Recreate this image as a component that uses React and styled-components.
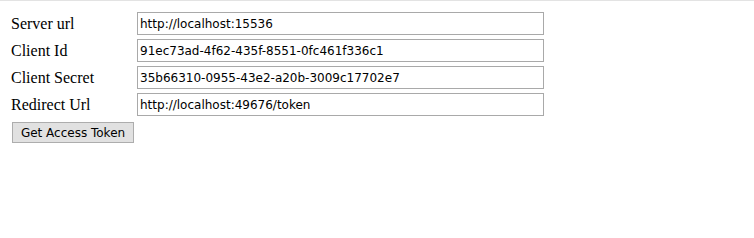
import { Fragment } from "react";
import styled, { createGlobalStyle } from "styled-components";

const GlobalStyle = createGlobalStyle`
    html, body {
        margin: 0;
        padding: 0;
        background: #ffffff;
    }
`;

const Page = styled.div`
    border-top: 1px solid #e3e3e3;
    padding: 11px 0 0 11px;
    height: 226px;
    font-family: "Liberation Serif", "Times New Roman", serif;
    color: #000000;
`;

const Form = styled.form`
    display: flex;
    flex-direction: column;
    align-items: flex-start;
`;

const Fields = styled.div`
    display: grid;
    grid-template-columns: 126px 407px;
    row-gap: 4px;
    align-items: center;
`;

const Label = styled.label`
    font-size: 16px;
    line-height: 23px;
    white-space: nowrap;
`;

const Field = styled.input`
    box-sizing: border-box;
    width: 407px;
    height: 23px;
    margin: 0;
    padding: 1px 2px;
    border: 1px solid #a9a9a9;
    outline: none;
    background: #ffffff;
    font-family: "DejaVu Sans", Verdana, sans-serif;
    font-size: 12px;
    color: #000000;
`;

const Button = styled.button`
    box-sizing: border-box;
    margin: 6px 0 0 1px;
    width: 122px;
    height: 21px;
    padding: 0;
    border: 1px solid #adadad;
    border-radius: 0;
    background: #e1e1e1;
    font-family: "DejaVu Sans", Verdana, sans-serif;
    font-size: 12px;
    color: #000000;
`;

const fields = [
    { id: "server", label: "Server url", value: "http://localhost:15536" },
    { id: "client", label: "Client Id", value: "91ec73ad-4f62-435f-8551-0fc461f336c1" },
    { id: "secret", label: "Client Secret", value: "35b66310-0955-43e2-a20b-3009c17702e7" },
    { id: "redirect", label: "Redirect Url", value: "http://localhost:49676/token" },
];

const App = () => {
    return (
        <>
            <GlobalStyle />
            <Page>
                <Form onSubmit={(e) => e.preventDefault()}>
                    <Fields>
                        {fields.map((f) => (
                            <Fragment key={f.id}>
                                <Label htmlFor={f.id}>{f.label}</Label>
                                <Field id={f.id} defaultValue={f.value} />
                            </Fragment>
                        ))}
                    </Fields>
                    <Button type="submit">Get Access Token</Button>
                </Form>
            </Page>
        </>
    );
};

export default App;
